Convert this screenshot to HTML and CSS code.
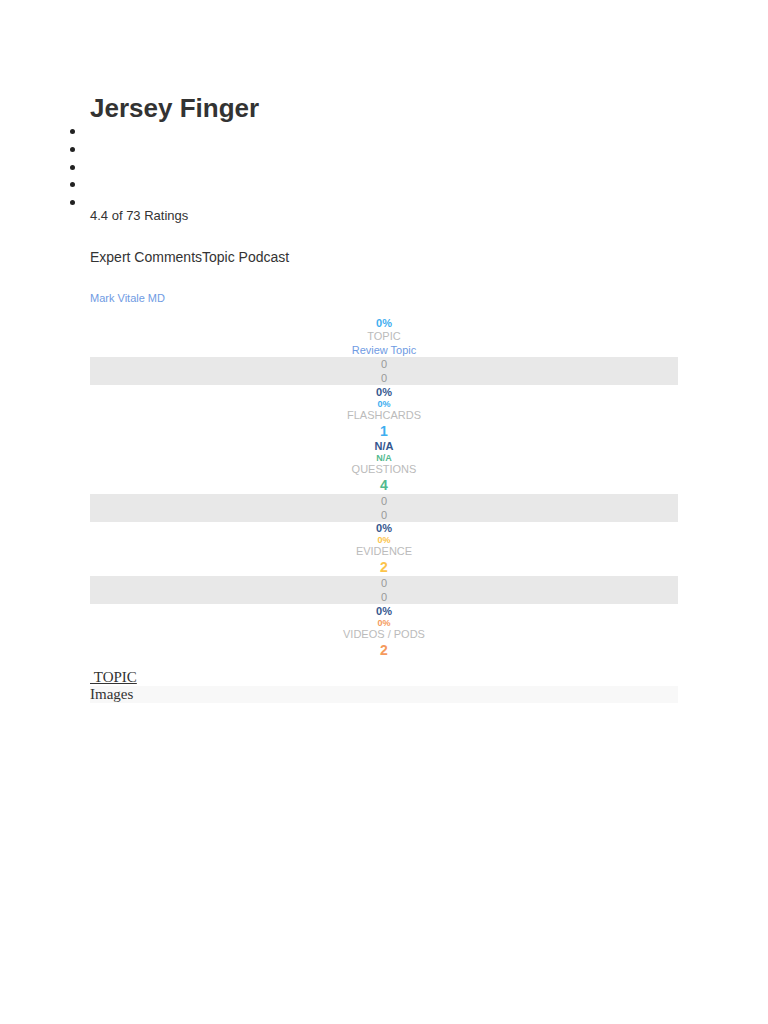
FILE: index.html
```html
<!DOCTYPE html>
<html>
<head>
<meta charset="utf-8">
<link rel="stylesheet" href="styles.css">
</head>
<body>
<div class="page">
  <h1 class="title">Jersey Finger</h1>
  <ul class="stars">
    <li></li><li></li><li></li><li></li><li></li>
  </ul>
  <div class="ratings">4.4 of 73 Ratings</div>
  <div class="tabs">Expert CommentsTopic Podcast</div>
  <div class="author">Mark Vitale MD</div>

  <div class="stats">
    <div class="sec">
      <div class="big c-light">0%</div>
      <div class="label">TOPIC</div>
      <div class="review">Review Topic</div>
    </div>
    <div class="grey"><div>0</div><div>0</div></div>
    <div class="sec sec-pad">
      <div class="big c-dark">0%</div>
      <div class="small c-light">0%</div>
      <div class="label">FLASHCARDS</div>
      <div class="count c-light">1</div>
      <div class="big c-dark">N/A</div>
      <div class="small c-green">N/A</div>
      <div class="label">QUESTIONS</div>
      <div class="count c-green">4</div>
    </div>
    <div class="grey"><div>0</div><div>0</div></div>
    <div class="sec">
      <div class="big c-dark">0%</div>
      <div class="small c-yellow">0%</div>
      <div class="label">EVIDENCE</div>
      <div class="count c-yellow">2</div>
    </div>
    <div class="grey"><div>0</div><div>0</div></div>
    <div class="sec sec-pad">
      <div class="big c-dark">0%</div>
      <div class="small c-orange">0%</div>
      <div class="label">VIDEOS / PODS</div>
      <div class="count c-orange">2</div>
    </div>
  </div>

  <div class="topic-link"><a>&nbsp;TOPIC</a></div>
  <div class="images">Images</div>
</div>
</body>
</html>
```

FILE: styles.css
```css
html, body {
  margin: 0;
  padding: 0;
  background: #ffffff;
}

body {
  font-family: "Liberation Sans", Arial, sans-serif;
  color: #333333;
}

.page {
  width: 588px;
  margin: 0 auto;
  padding-top: 93px;
}

.title {
  margin: 0;
  font-size: 26px;
  line-height: 30px;
  font-weight: bold;
  color: #333333;
}

.stars {
  margin: -1px 0 0 -4px;
  padding: 0;
  list-style: disc;
  font-size: 16px;
  line-height: 17.75px;
  color: #222;
}

.stars li {
  height: 17.75px;
}

.ratings {
  margin-top: -3px;
  font-size: 13px;
  line-height: 16px;
}

.tabs {
  margin-top: 25px;
  font-size: 14px;
  line-height: 16px;
}

.author {
  margin-top: 27px;
  font-size: 11px;
  line-height: 13px;
  color: #6f9be3;
}

.stats {
  margin-top: 12px;
  text-align: center;
  font-size: 11px;
}

.sec-pad {
  padding-top: 1px;
}

.big {
  font-weight: bold;
  font-size: 11px;
  line-height: 13px;
}

.small {
  font-weight: bold;
  font-size: 9px;
  line-height: 10px;
}

.label {
  font-size: 11px;
  line-height: 13px;
  color: #bbbbbb;
}

.review {
  font-size: 11px;
  line-height: 14px;
  color: #6f9be3;
}

.count {
  font-weight: bold;
  font-size: 14px;
  line-height: 18px;
}

.grey {
  background: #e8e8e8;
  color: #999999;
  font-size: 11px;
  line-height: 14px;
}

.c-light { color: #3eaef0; }
.c-dark { color: #34578f; }
.c-green { color: #52b98e; }
.c-yellow { color: #fcc44a; }
.c-orange { color: #f59a5c; }

.topic-link {
  margin-top: 10px;
  font-family: "Liberation Serif", "Times New Roman", serif;
  font-size: 15px;
  line-height: 17px;
}

.topic-link a {
  color: #333333;
  text-decoration: underline;
}

.images {
  font-family: "Liberation Serif", "Times New Roman", serif;
  font-size: 15px;
  line-height: 17px;
  background: #f8f8f8;
  color: #333333;
}
```
